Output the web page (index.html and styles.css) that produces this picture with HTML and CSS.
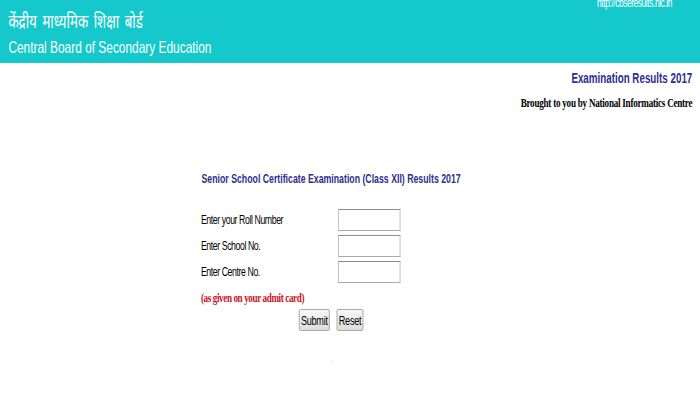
FILE: index.html
```html
<!DOCTYPE html>
<html lang="en">
<head>
<meta charset="utf-8">
<title>CBSE Examination Results 2017</title>
<link rel="stylesheet" href="styles.css">
</head>
<body>
<div class="page">
  <header class="masthead">
    <div class="brand">
      <div class="brand-hi" lang="hi">केंद्रीय माध्यमिक शिक्षा बोर्ड</div>
      <div class="brand-en">Central Board of Secondary Education</div>
    </div>
    <div class="url">http://cbseresults.nic.in</div>
  </header>

  <div class="subhead">
    <div class="exam-title">Examination Results 2017</div>
    <div class="credit">Brought to you by National Informatics Centre</div>
  </div>

  <form class="result-form" onsubmit="return false">
    <h1 class="form-title">Senior School Certificate Examination (Class XII) Results 2017</h1>
    <div class="fields">
      <label class="field-label" for="roll">Enter your Roll Number</label>
      <input class="field-input" id="roll" type="text">
      <label class="field-label" for="school">Enter School No.</label>
      <input class="field-input" id="school" type="text">
      <label class="field-label" for="centre">Enter Centre No.</label>
      <input class="field-input" id="centre" type="text">
    </div>
    <div class="note">(as given on your admit card)</div>
    <div class="actions">
      <button class="btn" type="submit">Submit</button>
      <button class="btn" type="reset">Reset</button>
    </div>
    <div class="dot">.</div>
  </form>
</div>
</body>
</html>
```
FILE: styles.css
```css
html, body {
  margin: 0;
  padding: 0;
  overflow: hidden;
  background: #ffffff;
}

.page {
  width: 1000px;
  transform: scaleX(0.7);
  transform-origin: 0 0;
  font-family: "Liberation Sans", Arial, sans-serif;
  color: #000;
}

.masthead {
  height: 63px;
  background: #14c8cc;
  display: flex;
  justify-content: space-between;
  align-items: flex-start;
  padding: 0 40px 0 12px;
  color: #ffffff;
}

.brand {
  padding-top: 11px;
}

.brand-hi {
  font-family: "Noto Sans Devanagari", "Lohit Devanagari", "Mangal", "Noto Sans", sans-serif;
  font-size: 19px;
  word-spacing: 3px;
  line-height: 25px;
  height: 25px;
}

.brand-en {
  font-size: 17px;
  line-height: 24px;
}

.url {
  font-size: 12px;
  letter-spacing: -0.6px;
  line-height: 12px;
  margin-top: -3px;
}

.subhead {
  text-align: right;
  padding: 5px 11px 0 0;
}

.exam-title {
  font-size: 14px;
  font-weight: bold;
  line-height: 20px;
  color: #2d2e8f;
}

.credit {
  font-family: "Liberation Serif", "Times New Roman", serif;
  font-size: 13px;
  letter-spacing: -0.35px;
  font-weight: bold;
  line-height: 20px;
  margin-top: 5px;
}

.result-form {
  width: 372px;
  margin: 56px 0 0 287px;
}

.form-title {
  margin: 0;
  font-size: 12.5px;
  line-height: 20px;
  font-weight: bold;
  color: #2d2e8f;
  text-align: center;
  white-space: nowrap;
}

.fields {
  margin-top: 20px;
  display: grid;
  grid-template-columns: 196px 89px;
  grid-auto-rows: 22px;
  row-gap: 4px;
  align-items: center;
}

.field-label {
  font-size: 12.5px;
  letter-spacing: -0.6px;
  line-height: 14px;
}

.field-input {
  box-sizing: border-box;
  width: 89px;
  height: 22px;
  margin: 0;
  padding: 0 2px;
  border: 1px solid #a9a9a9;
  border-top-color: #8c8c8c;
  background: #fff;
  font-size: 12px;
}

.note {
  font-family: "Liberation Serif", "Times New Roman", serif;
  font-size: 13px;
  letter-spacing: -0.55px;
  font-weight: bold;
  line-height: 20px;
  color: #cc1122;
  margin-top: 5px;
}

.actions {
  margin-top: 1px;
  display: flex;
  justify-content: center;
  gap: 10px;
}

.btn {
  box-sizing: border-box;
  height: 22px;
  margin: 0;
  padding: 0 2px;
  font-family: "Liberation Sans", Arial, sans-serif;
  font-size: 13px;
  letter-spacing: -0.4px;
  color: #000;
  background: linear-gradient(#f7f7f7, #dddddd);
  border: 1px solid #9a9a9a;
  border-radius: 2px;
}

.dot {
  margin-top: 22px;
  text-align: center;
  font-size: 10px;
  line-height: 12px;
  color: #c8c8c8;
}
```
